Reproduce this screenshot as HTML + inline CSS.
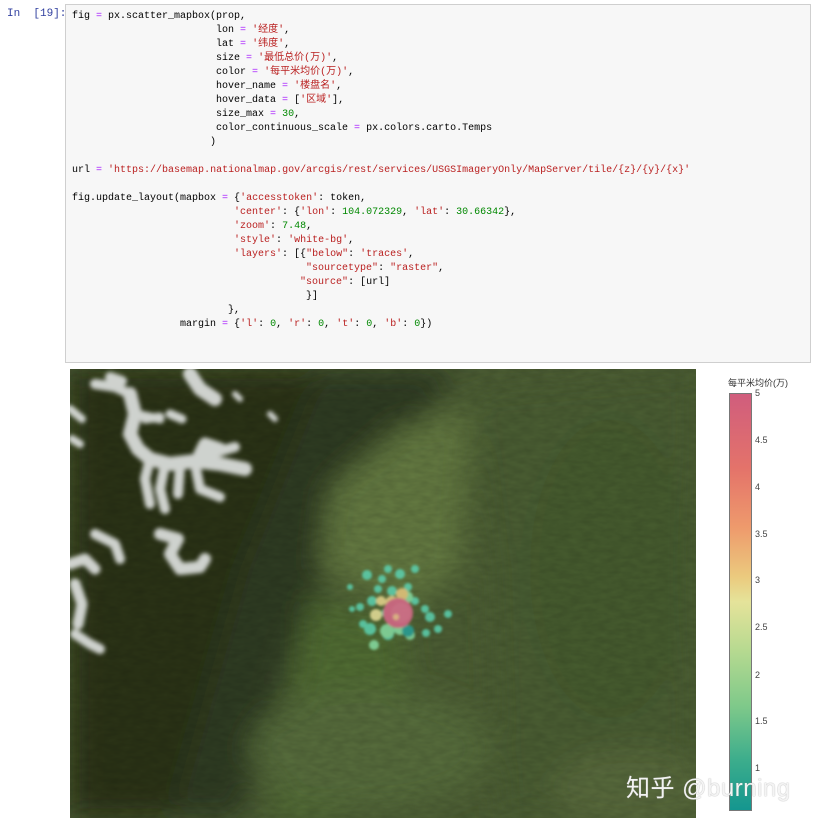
<!DOCTYPE html>
<html><head><meta charset="utf-8"><style>
html,body{margin:0;padding:0;background:#fff;width:819px;height:822px;overflow:hidden;position:relative}
.prompt{position:absolute;left:7px;top:8px;font:11px "Liberation Mono","Noto Sans CJK SC",monospace;color:#303f9f}
.cell{position:absolute;left:65px;top:4px;width:746px;height:359px;background:#f7f7f7;border:1px solid #cfcfcf;box-sizing:border-box}
pre{position:absolute;left:6px;top:5px;margin:0;font:10px/14px "Liberation Mono","Noto Sans CJK SC",monospace;color:#000}
.s{color:#ba2121}.n{color:#080}.o{color:#a2f}
.map{position:absolute;left:70px;top:369px;width:626px;height:449px}
.cb{position:absolute;left:729px;top:393px;width:23px;height:418px;background:linear-gradient(#d05d7d,#e4736a 18%,#ee9a6c 32%,#ebca7e 44%,#e5e39a 50%,#b5d990 62%,#7fc98a 75%,#3cad8c 88%,#14968f);border:1px solid #777;box-sizing:border-box}
.tk{position:absolute;left:755px;font:9px "Liberation Sans",sans-serif;color:#444}
.ct{position:absolute;left:728px;top:376px;font:9px "Liberation Sans","Noto Sans CJK SC",sans-serif;color:#333}
.wm{position:absolute;left:626px;top:768px;font:24px "Liberation Sans","Noto Sans CJK SC",sans-serif;color:rgba(255,255,255,.9);text-shadow:0 0 1px #888;letter-spacing:0.5px}
</style></head><body>
<div class="prompt">In&nbsp; [19]:</div>
<div class="cell"><pre>fig <span class="o">=</span> px.scatter_mapbox(prop,
                        lon <span class="o">=</span> <span class="s">'经度'</span>,
                        lat <span class="o">=</span> <span class="s">'纬度'</span>,
                        size <span class="o">=</span> <span class="s">'最低总价(万)'</span>,
                        color <span class="o">=</span> <span class="s">'每平米均价(万)'</span>,
                        hover_name <span class="o">=</span> <span class="s">'楼盘名'</span>,
                        hover_data <span class="o">=</span> [<span class="s">'区域'</span>],
                        size_max <span class="o">=</span> <span class="n">30</span>,
                        color_continuous_scale <span class="o">=</span> px.colors.carto.Temps
                       )

url <span class="o">=</span> <span class="s">'https://basemap.nationalmap.gov/arcgis/rest/services/USGSImageryOnly/MapServer/tile/{z}/{y}/{x}'</span>

fig.update_layout(mapbox <span class="o">=</span> {<span class="s">'accesstoken'</span>: token,
                           <span class="s">'center'</span>: {<span class="s">'lon'</span>: <span class="n">104.072329</span>, <span class="s">'lat'</span>: <span class="n">30.66342</span>},
                           <span class="s">'zoom'</span>: <span class="n">7.48</span>,
                           <span class="s">'style'</span>: <span class="s">'white-bg'</span>,
                           <span class="s">'layers'</span>: [{<span class="s">"below"</span>: <span class="s">'traces'</span>,
                                       <span class="s">"sourcetype"</span>: <span class="s">"raster"</span>,
                                      <span class="s">"source"</span>: [url]
                                       }]
                          },
                  margin <span class="o">=</span> {<span class="s">'l'</span>: <span class="n">0</span>, <span class="s">'r'</span>: <span class="n">0</span>, <span class="s">'t'</span>: <span class="n">0</span>, <span class="s">'b'</span>: <span class="n">0</span>})</pre></div>

<svg class="map" width="626" height="449" viewBox="0 0 626 449">
<defs>
<filter id="bl" x="-20%" y="-20%" width="140%" height="140%"><feGaussianBlur stdDeviation="14"/></filter>
<filter id="bs" x="-5%" y="-5%" width="110%" height="110%"><feGaussianBlur stdDeviation="2.2"/></filter>
<filter id="b1"><feGaussianBlur stdDeviation="1.2"/></filter>
<filter id="nz"><feTurbulence type="fractalNoise" baseFrequency="0.08 0.2" numOctaves="2" seed="3"/><feColorMatrix values="0 0 0 0 0  0 0 0 0 0  0 0 0 0 0  0 0 0 0.5 -0.1"/></filter>
</defs>
<rect width="626" height="449" fill="#4b5c33"/>
<g filter="url(#bl)">
<polygon points="0,0 390,0 300,120 230,260 170,449 0,449" fill="#2f3a20"/>
<polygon points="0,0 250,0 170,200 100,449 0,449" fill="#2b3219"/>
<polygon points="260,120 330,60 400,40 390,200 340,240 250,200" fill="#62773f"/>
<polygon points="240,230 330,250 350,420 260,449 200,449" fill="#4f6a33"/>
<polygon points="400,20 626,0 626,449 430,449 420,200" fill="#485c32"/>
<ellipse cx="540" cy="200" rx="80" ry="150" fill="#445a2f"/>
<ellipse cx="300" cy="380" rx="120" ry="60" fill="#556a3a"/>
<ellipse cx="560" cy="420" rx="80" ry="40" fill="#56683a"/>
</g>
<rect width="626" height="449" filter="url(#nz)" opacity="0.35"/>
<g stroke="#dde0de" fill="none" stroke-linecap="round" stroke-linejoin="round" filter="url(#bs)" opacity="0.92">
<path d="M25,15 L45,18 L60,25 M40,8 L52,12" stroke-width="10"/>
<path d="M60,25 L65,45 L60,65 L68,80 L80,90 L100,95 L125,92 L150,95 L175,100" stroke-width="14"/>
<path d="M100,45 L112,50 M65,45 L90,50 M75,50 L90,48" stroke-width="9"/>
<path d="M80,90 L75,110 L80,135 M95,95 L90,120 L95,140 M110,96 L108,125 M125,95 L130,120 L150,128 M140,85 L165,78" stroke-width="10"/>
<path d="M130,85 L135,75 L150,80" stroke-width="13"/>
<path d="M25,165 L45,175 L50,190" stroke-width="10"/>
<path d="M90,165 L108,170 L100,185 L110,200 L130,198 L135,190" stroke-width="12"/>
<path d="M120,5 L130,20 L145,30" stroke-width="14"/>
<path d="M0,40 L12,50 M2,70 L10,75" stroke-width="8"/>
<path d="M0,195 L15,190 L25,200 M5,215 L12,235 L8,255" stroke-width="11"/>
<path d="M5,265 L20,275 L30,280" stroke-width="10"/>
<path d="M165,25 L170,30 M200,45 L205,50" stroke-width="6"/>
</g>
<g filter="url(#b1)" opacity="0.85">
<g fill="#5bd1b0">
<circle cx="297" cy="206" r="5"/><circle cx="318" cy="200" r="4"/><circle cx="330" cy="205" r="5"/>
<circle cx="345" cy="200" r="4"/><circle cx="308" cy="220" r="4"/><circle cx="322" cy="222" r="5"/>
<circle cx="338" cy="218" r="4"/><circle cx="280" cy="218" r="3"/><circle cx="290" cy="238" r="4"/>
<circle cx="302" cy="232" r="5"/><circle cx="345" cy="232" r="4"/><circle cx="355" cy="240" r="4"/>
<circle cx="300" cy="260" r="6"/><circle cx="293" cy="255" r="4"/><circle cx="360" cy="248" r="5"/>
<circle cx="356" cy="264" r="4"/><circle cx="378" cy="245" r="4"/><circle cx="368" cy="260" r="4"/>
<circle cx="318" cy="265" r="6"/><circle cx="315" cy="244" r="4"/><circle cx="282" cy="240" r="3"/>
<circle cx="320" cy="262" r="5"/><circle cx="334" cy="246" r="5"/><circle cx="312" cy="210" r="4"/>
</g>
<g fill="#86dca3">
<circle cx="317" cy="262" r="7"/><circle cx="330" cy="260" r="6"/><circle cx="340" cy="266" r="5"/>
<circle cx="337" cy="228" r="6"/><circle cx="304" cy="276" r="5"/>
</g>
<circle cx="338" cy="262" r="6" fill="#25a09a"/>
<circle cx="332" cy="225" r="6" fill="#e7c77e"/>
<circle cx="322" cy="234" r="7" fill="#e9cf88"/>
<circle cx="311" cy="232" r="5" fill="#e6d58e"/>
<circle cx="306" cy="246" r="6" fill="#e8e09b"/>
<circle cx="328" cy="244" r="15" fill="#d9688a"/>
<circle cx="331" cy="244" r="10" fill="#e07896" opacity="0.6"/>
<circle cx="326" cy="248" r="3" fill="#f2c090"/>
</g>
</svg>

<div class="ct">每平米均价(万)</div>
<div class="cb"></div>
<div class="tk" style="top:388px">5</div>
<div class="tk" style="top:435px">4.5</div>
<div class="tk" style="top:482px">4</div>
<div class="tk" style="top:529px">3.5</div>
<div class="tk" style="top:575px">3</div>
<div class="tk" style="top:622px">2.5</div>
<div class="tk" style="top:670px">2</div>
<div class="tk" style="top:716px">1.5</div>
<div class="tk" style="top:763px">1</div>
<div class="wm">知乎 @burning</div>
</body></html>
